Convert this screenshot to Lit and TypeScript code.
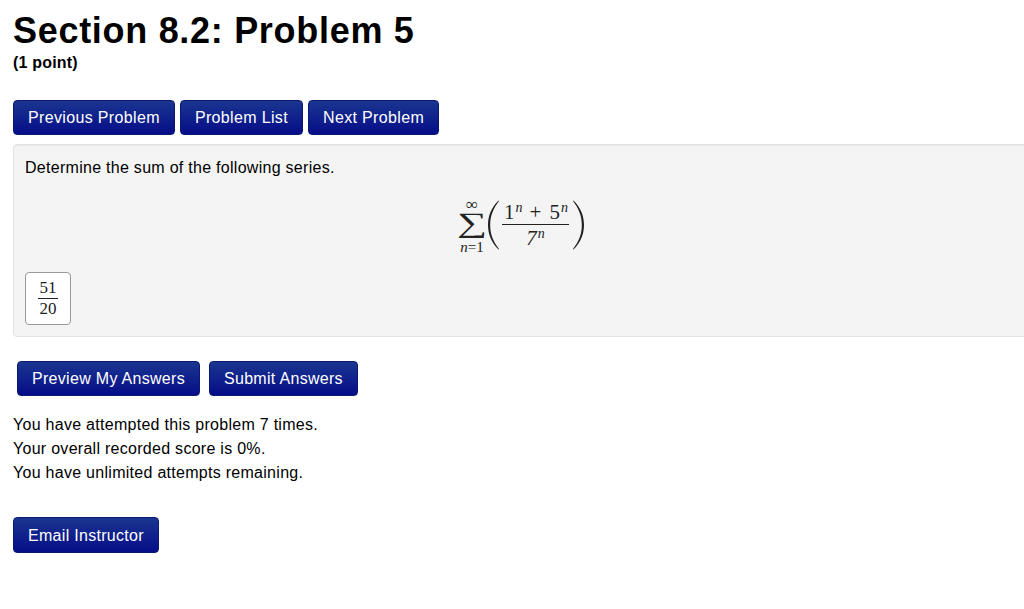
import { LitElement, html, css } from "lit";
import { customElement } from "lit/decorators.js";

@customElement("app-root")
export class AppRoot extends LitElement {
  static styles = css`
    :host { display: block; width: 1024px; height: 609px; overflow: hidden; background: #fff; color: #000; font-family: "Liberation Sans", Arial, sans-serif; font-size: 16px; }
    .page { padding: 0 0 0 13px; }
    h1 { margin: 0; padding-top: 11px; font-size: 36px; line-height: 40px; font-weight: 700; white-space: nowrap; letter-spacing: 0.7px; }
    .pts { margin-top: 2px; font-size: 16px; line-height: 20px; font-weight: 700; letter-spacing: 0.2px; }
    .nav { display: flex; gap: 5px; margin-top: 27px; }
    .btn { box-sizing: border-box; height: 35px; padding: 0 14px; display: flex; align-items: center; color: #fff; font-size: 16px; letter-spacing: 0.3px; white-space: nowrap; border: 1px solid #0a1a6e; border-radius: 4px; background: linear-gradient(#1a3590, #060d88); }
    .nav .btn { letter-spacing: 0.35px; }
    .well { box-sizing: border-box; margin-top: 9px; width: 1040px; height: 193px; padding: 13px 11px; background: #f4f4f4; border: 1px solid #e3e3e3; border-radius: 4px; box-shadow: inset 0 1px 1px rgba(0,0,0,.05); }
    .q { font-size: 16px; line-height: 20px; letter-spacing: 0.28px; }
    .eq { display: flex; align-items: center; justify-content: center; width: 1024px; height: 72px; margin-top: 11px; margin-left: -16px; font-family: "Liberation Serif", serif; color: #222; }
    .sum { display: flex; flex-direction: column; align-items: center; width: 30px; padding-top: 3px; }
    .lim { font-size: 15px; line-height: 12px; margin-top: 3px; }
    .inf { font-size: 17px; line-height: 7px; margin-top: 0; }
    .sig { font-size: 28px; line-height: 30px; transform: scaleX(1.5); }
    .par { flex: none; }
    .frac { display: inline-flex; flex-direction: column; align-items: center; margin: 0 3px 0 2px; }
    .num { display: flex; align-items: baseline; gap: 1px; font-size: 21px; line-height: 24px; padding: 0 1px 0 2px; white-space: nowrap; }
    .plus { margin: 0 7px 0 6px; }
    .num sup, .den sup { font-size: 14px; font-style: italic; line-height: 0; vertical-align: baseline; position: relative; top: -7px; margin-left: 1px; }
    .rule { align-self: stretch; height: 1px; background: #222; }
    .den { display: flex; align-items: baseline; gap: 1px; font-size: 21px; line-height: 26px; font-style: italic; }
    .ans { box-sizing: border-box; margin-top: 11px; width: 46px; height: 53px; background: #fff; border: 1px solid #999; border-radius: 4px; display: flex; align-items: center; justify-content: center; font-family: "Liberation Serif", serif; }
    .afrac { display: flex; flex-direction: column; align-items: center; font-size: 17px; line-height: 20px; color: #222; }
    .afrac .rule { width: 20px; align-self: center; height: 1.5px; }
    .actions { display: flex; gap: 9px; margin: 24px 0 0 4px; }
    .info { margin-top: 17px; font-size: 16px; line-height: 24px; letter-spacing: 0.28px; }
    .mail { display: flex; margin-top: 32px; }
    .mail .btn { height: 36px; padding-top: 1px; }
  `;

  private paren(flip: boolean) {
    return html`<svg class="par" width="13" height="50" viewBox="0 0 13 50" style=${flip ? "transform: scaleX(-1)" : ""}>
      <path d="M11.5 .5 C4 8 1 16 1 25 C1 34 4 42 11.5 49.5 L12 49 C6 41 3.2 34 3.2 25 C3.2 16 6 9 12 1 Z" fill="#222"></path>
    </svg>`;
  }

  render() {
    return html`
      <div class="page">
        <h1>Section 8.2: Problem 5</h1>
        <div class="pts">(1 point)</div>
        <div class="nav">
          <div class="btn">Previous Problem</div>
          <div class="btn">Problem List</div>
          <div class="btn">Next Problem</div>
        </div>
        <div class="well">
          <div class="q">Determine the sum of the following series.</div>
          <div class="eq">
            <div class="sum">
              <span class="lim inf">∞</span>
              <span class="sig">∑</span>
              <span class="lim"><i>n</i>=1</span>
            </div>
            ${this.paren(false)}
            <div class="frac">
              <div class="num"><span>1<sup>n</sup></span><span class="plus">+</span><span>5<sup>n</sup></span></div>
              <div class="rule"></div>
              <div class="den"><span>7<sup>n</sup></span></div>
            </div>
            ${this.paren(true)}
          </div>
          <div class="ans">
            <div class="afrac"><span>51</span><div class="rule"></div><span>20</span></div>
          </div>
        </div>
        <div class="actions">
          <div class="btn">Preview My Answers</div>
          <div class="btn">Submit Answers</div>
        </div>
        <div class="info">
          <div>You have attempted this problem 7 times.</div>
          <div>Your overall recorded score is 0%.</div>
          <div>You have unlimited attempts remaining.</div>
        </div>
        <div class="mail"><div class="btn">Email Instructor</div></div>
      </div>
    `;
  }
}
